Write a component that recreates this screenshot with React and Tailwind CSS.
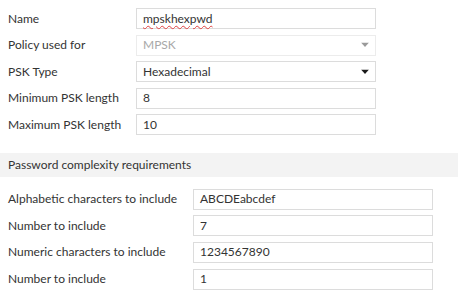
import React from 'react';

const Arrow = ({ muted }) => (
  <svg width="8" height="5" viewBox="0 0 8 5" className="absolute right-[6px] top-1/2 -translate-y-1/2">
    <path d="M0 0h8L4 4.5z" fill={muted ? '#9a9a9a' : '#1a1a1a'} />
  </svg>
);

const Field = ({ label, children, labelW = 'w-[136px]' }) => (
  <div className="flex items-center h-[21px]">
    <div className={`${labelW} shrink-0 pl-2 whitespace-nowrap text-[#333]`}>{label}</div>
    {children}
  </div>
);

const Box = ({ children, className = '' }) => (
  <div className={`relative w-[240px] h-[21px] border border-[#dcdcdc] bg-white px-[6px] flex items-center text-[#333] ${className}`}>
    {children}
  </div>
);

export default function App() {
  return (
    <div className="w-[458px] h-[303px] bg-white text-[12px] leading-none" style={{ fontFamily: 'Lato, "Open Sans", sans-serif' }}>
      <div className="pt-[8px] flex flex-col gap-[5.5px]">
        <Field label="Name">
          <Box>
            <span className="underline decoration-wavy decoration-[#e04040] decoration-1 underline-offset-2">mpskhexpwd</span>
          </Box>
        </Field>
        <Field label="Policy used for">
          <Box className="border-[#ececec] !text-[#a8a8a8]">
            MPSK
            <Arrow muted />
          </Box>
        </Field>
        <Field label="PSK Type">
          <Box>
            Hexadecimal
            <Arrow />
          </Box>
        </Field>
        <Field label="Minimum PSK length">
          <Box>8</Box>
        </Field>
        <Field label="Maximum PSK length">
          <Box>10</Box>
        </Field>
      </div>

      <div className="mt-[17.5px] h-[24px] bg-[#f3f3f3] flex items-center pl-2 text-[#333]">
        Password complexity requirements
      </div>

      <div className="pt-[12px] flex flex-col gap-[5.7px]">
        <Field label="Alphabetic characters to include" labelW="w-[193px]">
          <Box>ABCDEabcdef</Box>
        </Field>
        <Field label="Number to include" labelW="w-[193px]">
          <Box>7</Box>
        </Field>
        <Field label="Numeric characters to include" labelW="w-[193px]">
          <Box>1234567890</Box>
        </Field>
        <Field label="Number to include" labelW="w-[193px]">
          <Box>1</Box>
        </Field>
      </div>
    </div>
  );
}
